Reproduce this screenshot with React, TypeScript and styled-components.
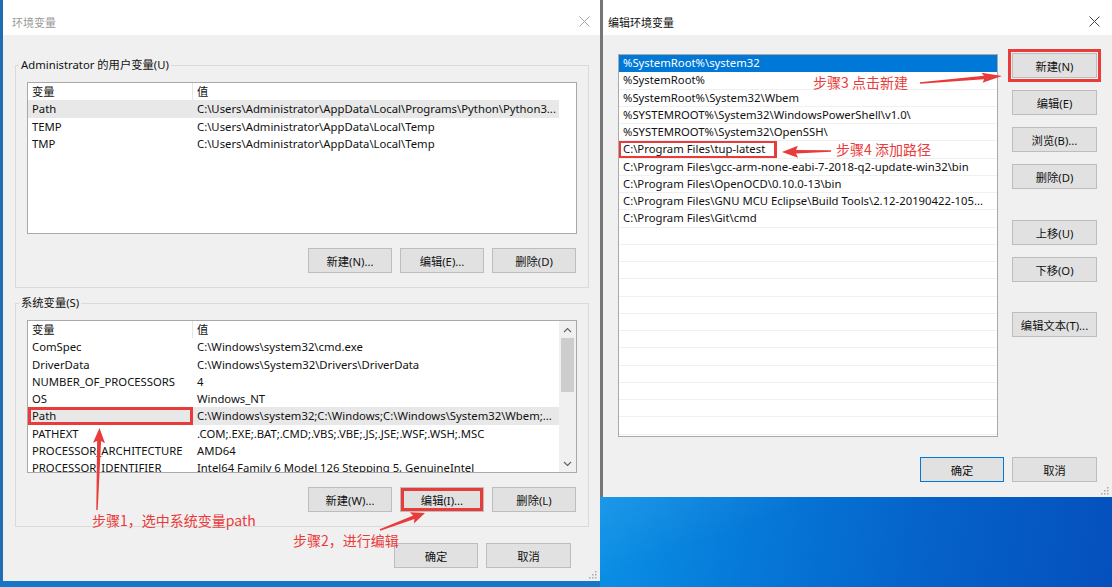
import React from "react";
import styled, { createGlobalStyle } from "styled-components";

const GlobalStyle = createGlobalStyle`
  html, body { margin: 0; padding: 0; }
  body {
    width: 1112px; height: 587px; overflow: hidden;
    font-family: "Noto Sans", "Noto Sans CJK SC", sans-serif;
    font-size: 11.3px; color: #000;
  }
  #root { width: 1112px; height: 587px; }
`;

const RED = "#ea3b3b";

const Screen = styled.div`
  position: relative;
  width: 1112px;
  height: 587px;
  display: flex;
  align-items: flex-start;
  background: #1677c9;
  overflow: hidden;
`;

const LeftDialog = styled.section`
  position: relative;
  flex: none;
  width: 600px;
  height: 581px;
  box-sizing: border-box;
  border-left: 3px solid #1f6db5;
  background: #f0f0f0;
  display: flex;
  flex-direction: column;
`;

const RightColumn = styled.div`
  flex: 1;
  height: 587px;
  display: flex;
  flex-direction: column;
`;

const RightDialog = styled.section`
  position: relative;
  flex: none;
  height: 497px;
  box-sizing: border-box;
  border-left: 3px solid #767676;
  background: #f0f0f0;
  display: flex;
  flex-direction: column;
`;

const Desktop = styled.div`
  flex: 1;
  background:
    linear-gradient(160deg, rgba(255,255,255,0.08) 0%, rgba(255,255,255,0) 30%),
    linear-gradient(100deg, #0a90e6 0%, #0679d8 30%, #0561c8 65%, #0550bd 100%);
`;

const TitleBar = styled.header<{ $inactive?: boolean; $pl: number; $pr: number }>`
  flex: none;
  height: 35px;
  box-sizing: border-box;
  padding: 8px ${(p) => p.$pr}px 0 ${(p) => p.$pl}px;
  background: #fff;
  display: flex;
  align-items: center;
  justify-content: space-between;
  color: ${(p) => (p.$inactive ? "#9b9b9b" : "#111")};
  font-size: 11px;
`;

const CloseGlyph = styled.svg<{ $inactive?: boolean }>`
  display: block;
  color: ${(p) => (p.$inactive ? "#a8a8a8" : "#444")};
`;

const LeftBody = styled.div`
  flex: 1;
  display: flex;
  flex-direction: column;
  padding: 22px 11px 0 12px;
`;

const Group = styled.fieldset<{ $gap?: number }>`
  margin: ${(p) => p.$gap ?? 0}px 0 0 0;
  min-width: 0;
  border: 1px solid #dadada;
  padding: 9px 11px 14px 11px;
  display: flex;
  flex-direction: column;
`;

const GroupLegend = styled.legend`
  margin-left: -8px;
  padding: 0 2px;
  line-height: 16px;
  font-size: 11.3px;
  color: #111;
`;

const ListBox = styled.div<{ $h: number }>`
  height: ${(p) => p.$h}px;
  box-sizing: border-box;
  border: 1px solid #a9a9a9;
  background: #fff;
  display: flex;
  overflow: hidden;
`;

const Table = styled.div`
  flex: 1;
  min-width: 0;
  display: flex;
  flex-direction: column;
`;

const TableRow = styled.div<{ $selected?: boolean }>`
  flex: none;
  display: flex;
  height: 17.25px;
  width: 531px;
  background: ${(p) => (p.$selected ? "#e8e8e8" : "transparent")};
`;

const Cell = styled.div<{ $w: number; $header?: boolean; $marked?: boolean }>`
  flex: none;
  width: ${(p) => p.$w}px;
  box-sizing: border-box;
  padding-left: 4px;
  line-height: 17.25px;
  white-space: nowrap;
  overflow: hidden;
  color: #111;
  border-right: ${(p) => (p.$header ? "1px solid #e5e5e5" : "none")};
  box-shadow: ${(p) => (p.$marked ? `inset 0 0 0 3px ${RED}` : "none")};
`;

const ScrollBar = styled.div`
  flex: none;
  width: 17px;
  background: #f0f0f0;
  display: flex;
  flex-direction: column;
`;

const ScrollArrow = styled.div`
  flex: none;
  height: 17px;
  display: flex;
  align-items: center;
  justify-content: center;
  color: #606060;
`;

const ScrollTrack = styled.div`
  flex: 1;
  display: flex;
  flex-direction: column;
  align-items: center;
`;

const ScrollThumb = styled.div`
  width: 13px;
  height: 54px;
  background: #cdcdcd;
`;

const ButtonRow = styled.div<{ $mt: number; $pr?: number }>`
  display: flex;
  justify-content: flex-end;
  gap: 8px;
  margin-top: ${(p) => p.$mt}px;
  padding-right: ${(p) => p.$pr ?? 0}px;
`;

const WinButton = styled.button<{ $w?: number; $default?: boolean; $marked?: boolean; $ring?: boolean }>`
  flex: none;
  width: ${(p) => p.$w ?? 84}px;
  height: 25px;
  box-sizing: border-box;
  padding: 0;
  background: #e1e1e1;
  border: 1px solid ${(p) => (p.$default ? "#0078d7" : "#bdbdbd")};
  font-family: inherit;
  font-size: 11.3px;
  color: #111;
  box-shadow: ${(p) => (p.$marked ? `inset 0 0 0 3px ${RED}` : "none")};
  outline: ${(p) => (p.$ring ? `3px solid ${RED}` : "none")};
  outline-offset: 1px;
`;

const Grip = styled.svg`
  position: absolute;
  right: 3px;
  bottom: 2px;
`;

const RightBody = styled.div`
  flex: 1;
  display: flex;
  flex-direction: column;
  padding: 19px 15px 0 15px;
`;

const EditArea = styled.div`
  display: flex;
  gap: 14px;
  align-items: flex-start;
`;

const PathList = styled.div`
  flex: 1;
  height: 383px;
  box-sizing: border-box;
  border: 1px solid #a9a9a9;
  background: #fff;
  overflow: hidden;
  display: flex;
  flex-direction: column;
`;

const PathRow = styled.div<{ $selected?: boolean }>`
  flex: none;
  height: 17.25px;
  box-sizing: border-box;
  border-bottom: 1px solid ${(p) => (p.$selected ? "#0078d7" : "#f0f0f0")};
  background: ${(p) => (p.$selected ? "#0078d7" : "#fff")};
  color: ${(p) => (p.$selected ? "#fff" : "#111")};
  padding-left: 4px;
  line-height: 16.5px;
  white-space: nowrap;
  overflow: hidden;
`;

const MarkedText = styled.span`
  display: inline-block;
  margin-left: -5px;
  margin-top: -1px;
  padding: 0 12px 0 5px;
  height: 19px;
  line-height: 18px;
  box-sizing: border-box;
  box-shadow: inset 0 0 0 3px ${RED};
`;

const ButtonColumn = styled.div`
  flex: none;
  width: 85px;
  margin-top: -1px;
  display: flex;
  flex-direction: column;
  gap: 12px;
`;

const ColumnGroup = styled.div<{ $mt?: number }>`
  display: flex;
  flex-direction: column;
  gap: 12px;
  margin-top: ${(p) => p.$mt ?? 0}px;
`;

const Overlay = styled.svg`
  position: absolute;
  left: 0;
  top: 0;
  pointer-events: none;
`;

const Note = styled.span<{ $x: number; $y: number }>`
  position: absolute;
  left: ${(p) => p.$x}px;
  top: ${(p) => p.$y}px;
  font-family: "Noto Sans CJK SC", "Noto Sans", sans-serif;
  font-size: 14px;
  line-height: 20px;
  color: ${RED};
  white-space: nowrap;
  pointer-events: none;
`;

type Pt = [number, number];
function arrow(tail: Pt, tip: Pt, headLen: number, headHalf: number, tailW: number, neckW: number) {
  const [x1, y1] = tail;
  const [x2, y2] = tip;
  const dx = x2 - x1;
  const dy = y2 - y1;
  const L = Math.hypot(dx, dy);
  const ux = dx / L;
  const uy = dy / L;
  const nx = -uy;
  const ny = ux;
  const bx = x2 - ux * headLen;
  const by = y2 - uy * headLen;
  const back = 2;
  const pts: Pt[] = [
    [x1 + (nx * tailW) / 2, y1 + (ny * tailW) / 2],
    [bx + (nx * neckW) / 2 + ux * back, by + (ny * neckW) / 2 + uy * back],
    [bx + nx * headHalf, by + ny * headHalf],
    [x2, y2],
    [bx - nx * headHalf, by - ny * headHalf],
    [bx - (nx * neckW) / 2 + ux * back, by - (ny * neckW) / 2 + uy * back],
    [x1 - (nx * tailW) / 2, y1 - (ny * tailW) / 2],
  ];
  return pts.map((p) => `${p[0].toFixed(1)},${p[1].toFixed(1)}`).join(" ");
}

const Close = ({ inactive }: { inactive?: boolean }) => (
  <CloseGlyph $inactive={inactive} width="11" height="11" viewBox="0 0 11 11">
    <path d="M0.5 0.5 L10.5 10.5 M10.5 0.5 L0.5 10.5" stroke="currentColor" strokeWidth="1" fill="none" />
  </CloseGlyph>
);

const ResizeGrip = () => (
  <Grip width="9" height="9" viewBox="0 0 9 9">
    {[
      [7, 7],
      [4, 7],
      [1, 7],
      [7, 4],
      [4, 4],
      [7, 1],
    ].map(([x, y], i) => (
      <rect key={i} x={x} y={y} width="1.5" height="1.5" fill="#a8a8a8" />
    ))}
  </Grip>
);

const userVars: [string, string][] = [
  ["Path", "C:\\Users\\Administrator\\AppData\\Local\\Programs\\Python\\Python3..."],
  ["TEMP", "C:\\Users\\Administrator\\AppData\\Local\\Temp"],
  ["TMP", "C:\\Users\\Administrator\\AppData\\Local\\Temp"],
];

const sysVars: [string, string][] = [
  ["ComSpec", "C:\\Windows\\system32\\cmd.exe"],
  ["DriverData", "C:\\Windows\\System32\\Drivers\\DriverData"],
  ["NUMBER_OF_PROCESSORS", "4"],
  ["OS", "Windows_NT"],
  ["Path", "C:\\Windows\\system32;C:\\Windows;C:\\Windows\\System32\\Wbem;..."],
  ["PATHEXT", ".COM;.EXE;.BAT;.CMD;.VBS;.VBE;.JS;.JSE;.WSF;.WSH;.MSC"],
  ["PROCESSOR_ARCHITECTURE", "AMD64"],
  ["PROCESSOR_IDENTIFIER", "Intel64 Family 6 Model 126 Stepping 5, GenuineIntel"],
];

const paths = [
  "%SystemRoot%\\system32",
  "%SystemRoot%",
  "%SystemRoot%\\System32\\Wbem",
  "%SYSTEMROOT%\\System32\\WindowsPowerShell\\v1.0\\",
  "%SYSTEMROOT%\\System32\\OpenSSH\\",
  "C:\\Program Files\\tup-latest",
  "C:\\Program Files\\gcc-arm-none-eabi-7-2018-q2-update-win32\\bin",
  "C:\\Program Files\\OpenOCD\\0.10.0-13\\bin",
  "C:\\Program Files\\GNU MCU Eclipse\\Build Tools\\2.12-20190422-105...",
  "C:\\Program Files\\Git\\cmd",
];

const VarTable = ({ rows, markPath }: { rows: [string, string][]; markPath?: boolean }) => (
  <Table>
    <TableRow>
      <Cell $w={165} $header>变量</Cell>
      <Cell $w={366}>值</Cell>
    </TableRow>
    {rows.map(([k, v]) => {
      const sel = k === "Path";
      return (
        <TableRow key={k} $selected={sel}>
          <Cell $w={165} $marked={markPath && sel}>{k}</Cell>
          <Cell $w={366}>{v}</Cell>
        </TableRow>
      );
    })}
  </Table>
);

export default function App() {
  const emptyRows = Array.from({ length: 12 });
  return (
    <Screen>
      <GlobalStyle />
      <LeftDialog>
        <TitleBar $inactive $pl={9} $pr={10}>
          <span>环境变量</span>
          <Close inactive />
        </TitleBar>
        <LeftBody>
          <Group>
            <GroupLegend>Administrator 的用户变量(U)</GroupLegend>
            <ListBox $h={152}>
              <VarTable rows={userVars} />
            </ListBox>
            <ButtonRow $mt={14} $pr={1}>
              <WinButton>新建(N)...</WinButton>
              <WinButton>编辑(E)...</WinButton>
              <WinButton>删除(D)</WinButton>
            </ButtonRow>
          </Group>
          <Group $gap={7}>
            <GroupLegend>系统变量(S)</GroupLegend>
            <ListBox $h={153}>
              <VarTable rows={sysVars} markPath />
              <ScrollBar>
                <ScrollArrow>
                  <svg width="9" height="6" viewBox="0 0 9 6">
                    <path d="M1 5 L4.5 1.5 L8 5" stroke="currentColor" strokeWidth="1.1" fill="none" />
                  </svg>
                </ScrollArrow>
                <ScrollTrack>
                  <ScrollThumb />
                </ScrollTrack>
                <ScrollArrow>
                  <svg width="9" height="6" viewBox="0 0 9 6">
                    <path d="M1 1 L4.5 4.5 L8 1" stroke="currentColor" strokeWidth="1.1" fill="none" />
                  </svg>
                </ScrollArrow>
              </ScrollBar>
            </ListBox>
            <ButtonRow $mt={14} $pr={1}>
              <WinButton>新建(W)...</WinButton>
              <WinButton $marked>编辑(I)...</WinButton>
              <WinButton>删除(L)</WinButton>
            </ButtonRow>
          </Group>
          <ButtonRow $mt={16} $pr={18}>
            <WinButton>确定</WinButton>
            <WinButton $w={85}>取消</WinButton>
          </ButtonRow>
        </LeftBody>
        <ResizeGrip />
      </LeftDialog>

      <RightColumn>
        <RightDialog>
          <TitleBar $pl={5} $pr={12}>
            <span>编辑环境变量</span>
            <Close />
          </TitleBar>
          <RightBody>
            <EditArea>
              <PathList>
                {paths.map((p, i) => (
                  <PathRow key={p} $selected={i === 0}>
                    {p === "C:\\Program Files\\tup-latest" ? <MarkedText>{p}</MarkedText> : p}
                  </PathRow>
                ))}
                {emptyRows.map((_, i) => (
                  <PathRow key={`e${i}`} />
                ))}
              </PathList>
              <ButtonColumn>
                <ColumnGroup>
                  <WinButton $w={85} $ring>新建(N)</WinButton>
                  <WinButton $w={85}>编辑(E)</WinButton>
                  <WinButton $w={85}>浏览(B)...</WinButton>
                  <WinButton $w={85}>删除(D)</WinButton>
                </ColumnGroup>
                <ColumnGroup $mt={19}>
                  <WinButton $w={85}>上移(U)</WinButton>
                  <WinButton $w={85}>下移(O)</WinButton>
                </ColumnGroup>
                <ColumnGroup $mt={18}>
                  <WinButton $w={85}>编辑文本(T)...</WinButton>
                </ColumnGroup>
              </ButtonColumn>
            </EditArea>
            <ButtonRow $mt={20}>
              <WinButton $default>确定</WinButton>
              <WinButton $w={85}>取消</WinButton>
            </ButtonRow>
          </RightBody>
          <ResizeGrip />
        </RightDialog>
        <Desktop />
      </RightColumn>

      <Overlay width="1112" height="587" viewBox="0 0 1112 587">
        <polygon points={arrow([97, 510], [99.5, 428], 15, 6, 1.5, 4)} fill={RED} />
        <polygon points={arrow([380, 530], [425, 513], 14, 6, 1.5, 3.5)} fill={RED} />
        <polygon points={arrow([920, 83], [1002, 76], 20, 5, 1.5, 3.5)} fill={RED} />
        <polygon points={arrow([831, 151], [782, 152], 16, 6, 1.5, 3.5)} fill={RED} />
      </Overlay>
      <Note $x={92} $y={510}>步骤1，选中系统变量path</Note>
      <Note $x={293} $y={530}>步骤2，进行编辑</Note>
      <Note $x={813} $y={72}>步骤3 点击新建</Note>
      <Note $x={836} $y={139}>步骤4 添加路径</Note>
    </Screen>
  );
}
